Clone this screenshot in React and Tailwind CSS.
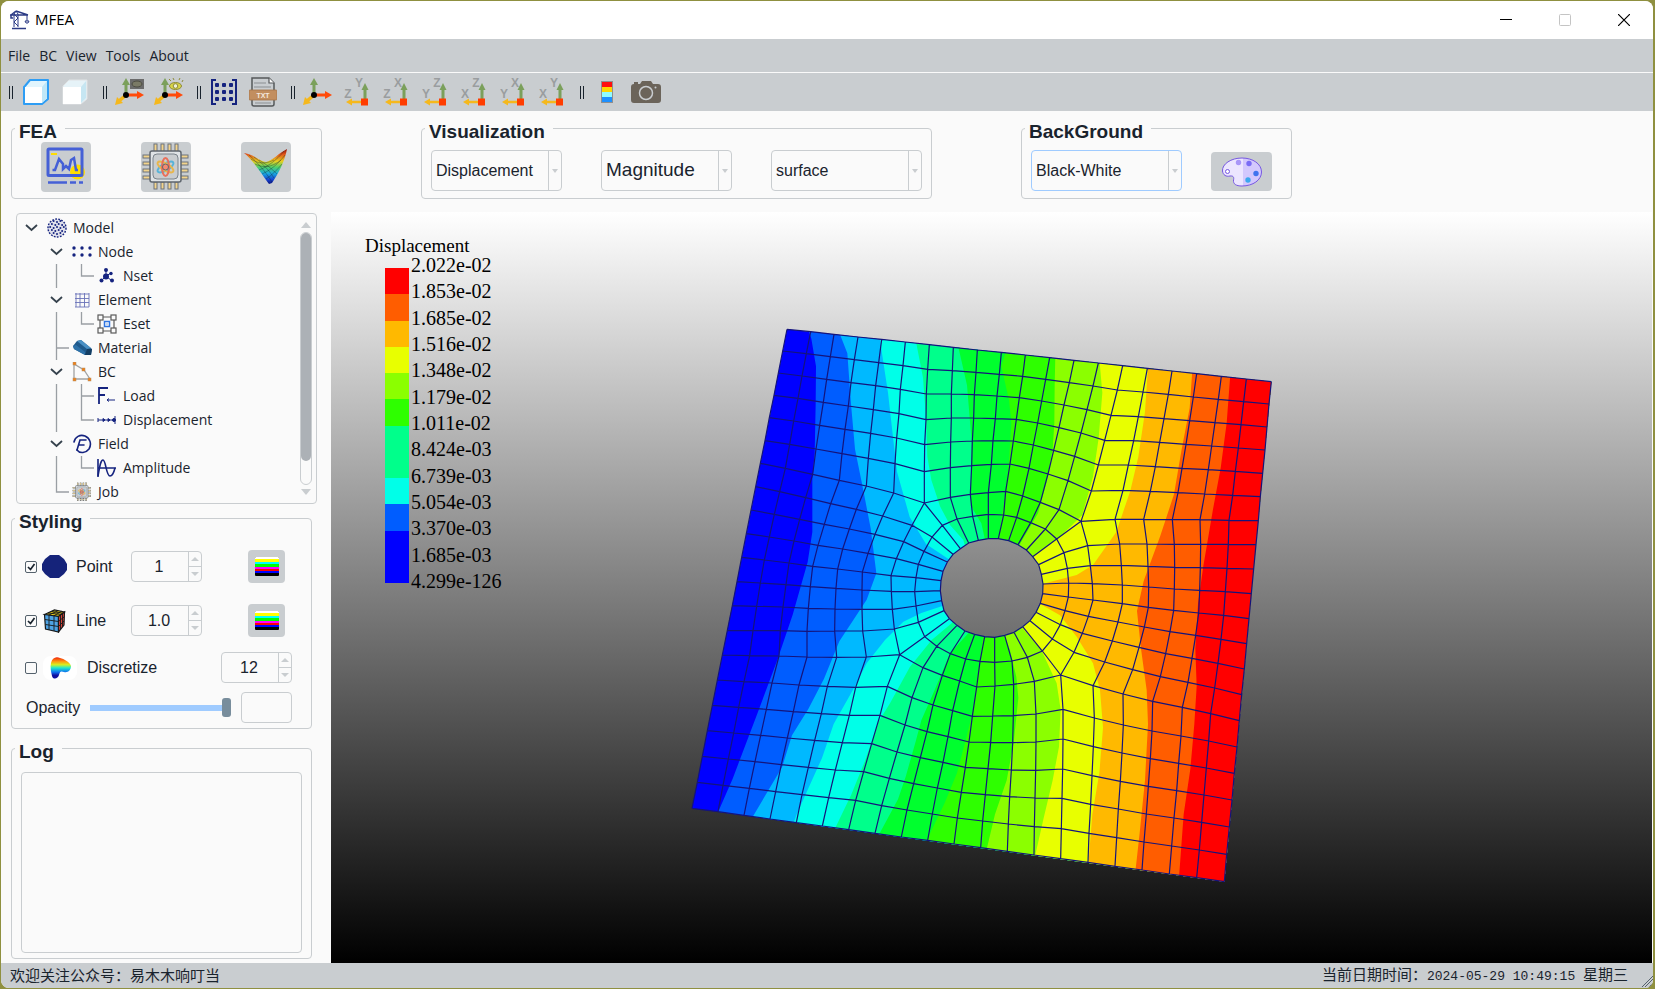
import { useState } from "react";

const toolbarGroups = [
  ["cube-solid", "cube-ghost"],
  ["axes-hidden", "axes-visible"],
  ["matrix", "txt"],
  ["axes", "Y-Z", "X-Z", "Z-Y", "Z-X", "X-Y", "Y-X"],
  ["legend", "camera"],
];

// guides: one entry per 25px column in front of the icon
const treeRows = [
  { label: "Model", icon: "model", guides: ["open"] },
  { label: "Node", icon: "node", guides: ["", "open"] },
  { label: "Nset", icon: "nset", guides: ["", "line", "ell"] },
  { label: "Element", icon: "element", guides: ["", "open"] },
  { label: "Eset", icon: "eset", guides: ["", "line", "ell"] },
  { label: "Material", icon: "material", guides: ["", "tee"] },
  { label: "BC", icon: "bc", guides: ["", "open"] },
  { label: "Load", icon: "load", guides: ["", "line", "tee"] },
  { label: "Displacement", icon: "displacement", guides: ["", "line", "ell"] },
  { label: "Field", icon: "field", guides: ["", "open"] },
  { label: "Amplitude", icon: "amplitude", guides: ["", "line", "ell"] },
  { label: "Job", icon: "chip", guides: ["", "ell"] },
];

const scaleLabels = [
  "2.022e-02", "1.853e-02", "1.685e-02", "1.516e-02", "1.348e-02", "1.179e-02", "1.011e-02",
  "8.424e-03", "6.739e-03", "5.054e-03", "3.370e-03", "1.685e-03", "4.299e-126",
];

const scaleColors = [
  "#ff0000", "#ff5d00", "#ffb900", "#e8ff00", "#8bff00", "#2eff00",
  "#00ff8b", "#00ff8b", "#00ffe8", "#005dff", "#0000ff", "#0000ff",
];

/* ---------- Mesh ---------- */

const DIVISIONS = 20;
const corners = { tl: [275, 51], tr: [1520, 190], br: [1399, 1519], bl: [31, 1324] };

// graded split of one plate side, nodes from..to
function side(a, b, grade, from, to) {
  const pts = [];
  for (let i = from; i <= to; i++) {
    const t = i / DIVISIONS;
    const s = t - grade * t * (1 - t);
    pts.push([a[0] + (b[0] - a[0]) * s, a[1] + (b[1] - a[1]) * s]);
  }
  return pts;
}

const topSide = (f, t) => side(corners.tl, corners.tr, 0.03, f, t);
const bottomSide = (f, t) => side(corners.bl, corners.br, 0.032, f, t);
const leftSide = (f, t) => side(corners.tl, corners.bl, 0.094, f, t);
const rightSide = (f, t) => side(corners.tr, corners.br, 0.104, f, t);

// spokes from the inner square to the sides
const topLeft = [[641, 92], [637, 158], [633, 223], [632, 291], [629, 358], [628, 430], [628, 513]];
const topRight = [[1138, 148], [1124, 213], [1108, 280], [1092, 346], [1075, 412], [1057, 481], [1031, 562]];
const leftTop = [[209, 408], [273, 421], [343, 437], [411, 453], [480, 468], [550, 486], [628, 513]];
const leftBottom = [[110, 915], [180, 917], [255, 918], [327, 921], [403, 922], [479, 922], [565, 916]];
const rightTop = [[1031, 562], [1118, 556], [1192, 556], [1266, 557], [1337, 557], [1412, 558], [1487, 559]];
const rightBottom = [[979, 970], [1062, 998], [1139, 1020], [1215, 1040], [1291, 1056], [1364, 1072], [1438, 1091]];
const bottomLeft = [[565, 916], [533, 1000], [514, 1077], [493, 1152], [472, 1227], [452, 1303], [434, 1381]];
const bottomRight = [[979, 970], [985, 1061], [985, 1140], [984, 1220], [982, 1298], [980, 1378], [979, 1458]];

// inner square around the hole
const squareTop = [[628, 513], [695, 498], [746, 490], [793, 485], [837, 482], [881, 494], [926, 511], [974, 531], [1031, 562]];
const squareRight = [[1031, 562], [1048, 626], [1055, 679], [1060, 727], [1062, 771], [1050, 814], [1034, 859], [1013, 910], [979, 970]];
const squareBottom = [[565, 916], [625, 950], [674, 971], [719, 986], [763, 1002], [810, 999], [858, 995], [911, 987], [979, 970]];
const squareLeft = [[628, 513], [596, 572], [575, 616], [556, 661], [542, 706], [543, 748], [546, 795], [551, 848], [565, 916]];

// 32 nodes each, clockwise from the upper left corner
const ring = [
  [247, 226], [291, 207], [338, 199], [385, 193], [431, 195], [470, 202], [512, 218], [556, 237],
  [590, 267], [612, 308], [622, 355], [626, 399], [625, 441], [615, 482], [601, 524], [577, 567],
  [547, 603], [502, 622], [456, 633], [404, 637], [360, 634], [317, 627], [271, 611], [230, 589],
  [194, 560], [175, 517], [168, 468], [164, 425], [168, 383], [175, 343], [192, 304], [216, 261],
];
const hole = [
  [301, 296], [326, 279], [355, 271], [385, 266], [415, 266], [446, 272], [474, 284], [499, 300],
  [518, 320], [536, 344], [544, 373], [549, 402], [548, 431], [541, 460], [528, 487], [510, 512],
  [488, 530], [462, 547], [434, 556], [404, 562], [374, 560], [344, 553], [315, 543], [291, 526],
  [268, 506], [252, 482], [245, 452], [241, 422], [243, 392], [249, 364], [262, 336], [279, 313],
];

// contour curves, blue to red
const contours = [
  { color: "#005dff", pts: [[328, 50], [338, 76], [350, 150], [349, 250], [346, 380], [340, 450], [340, 590], [328, 670], [290, 810], [250, 930], [200, 1070], [135, 1245], [98, 1335]] },
  { color: "#00b9ff", pts: [[410, 60], [430, 115], [440, 250], [450, 370], [470, 470], [490, 580], [505, 700], [480, 770], [410, 880], [370, 980], [330, 1060], [288, 1130], [262, 1215], [185, 1350]] },
  { color: "#00ffe8", pts: [[512, 70], [518, 110], [535, 220], [547, 330], [558, 430], [590, 550], [632, 622], [695, 665], [720, 740], [680, 785], [620, 805], [574, 828], [527, 877], [480, 939], [450, 1000], [395, 1100], [365, 1190], [300, 1340], [290, 1370]] },
  { color: "#00ff8b", pts: [[606, 80], [625, 180], [632, 290], [636, 390], [646, 452], [668, 522], [694, 571], [728, 611], [760, 730], [698, 833], [647, 877], [591, 948], [540, 1045], [510, 1095], [475, 1200], [440, 1290], [395, 1385]] },
  { color: "#00ff2e", pts: [[714, 90], [738, 200], [750, 350], [747, 520], [775, 567], [783, 607], [780, 740], [741, 859], [694, 912], [655, 1010], [620, 1090], [605, 1150], [580, 1240], [560, 1300], [508, 1400]] },
  { color: "#2eff00", pts: [[838, 110], [826, 150], [846, 240], [852, 300], [846, 400], [837, 482], [828, 545], [818, 607], [800, 740], [779, 868], [762, 992], [753, 1063], [738, 1130], [712, 1230], [680, 1310], [633, 1412]] },
  { color: "#8bff00", pts: [[965, 120], [963, 200], [962, 300], [958, 370], [942, 460], [920, 540], [874, 622], [830, 740], [835, 865], [848, 904], [865, 975], [870, 1030], [858, 1150], [840, 1250], [810, 1340], [787, 1440]] },
  { color: "#e8ff00", pts: [[1078, 130], [1086, 220], [1076, 340], [1062, 443], [1034, 545], [977, 602], [908, 655], [860, 740], [878, 843], [930, 905], [968, 992], [979, 1063], [974, 1160], [958, 1250], [935, 1350], [912, 1455]] },
  { color: "#ffb900", pts: [[1203, 150], [1195, 270], [1178, 390], [1158, 480], [1122, 590], [1062, 678], [1020, 704], [934, 727], [890, 750], [925, 780], [977, 811], [1020, 868], [1062, 939], [1080, 1010], [1087, 1110], [1078, 1230], [1060, 1340], [1050, 1475]] },
  { color: "#ff5d00", pts: [[1317, 160], [1310, 260], [1290, 370], [1270, 490], [1235, 600], [1192, 720], [1175, 800], [1185, 900], [1200, 1010], [1203, 1100], [1195, 1250], [1182, 1390], [1170, 1500]] },
  { color: "#ff0000", pts: [[1415, 170], [1405, 300], [1390, 420], [1370, 530], [1345, 680], [1332, 780], [1325, 900], [1328, 1000], [1322, 1100], [1312, 1220], [1295, 1340], [1282, 1520]] },
];

// plate space -> drawing space
const plate = ([x, y]) => [Math.round(x * 1.167 - 540), Math.round(y * 1.129 - 420)];

function coons(top, bottom, left, right) {
  const n = top.length - 1;
  const m = left.length - 1;
  return left.map((_, j) =>
    top.map((_, i) => {
      const u = i / n;
      const v = j / m;
      return [0, 1].map(
        (k) =>
          (1 - v) * top[i][k] + v * bottom[i][k] + (1 - u) * left[j][k] + u * right[j][k] -
          ((1 - u) * (1 - v) * top[0][k] + u * (1 - v) * top[n][k] + (1 - u) * v * bottom[0][k] + u * v * bottom[n][k])
      );
    })
  );
}

const blocks = [
  coons(topSide(0, 6), leftTop, leftSide(0, 6), topLeft),
  coons(topSide(6, 14), squareTop, topLeft, topRight),
  coons(topSide(14, 20), rightTop, topRight, rightSide(0, 6)),
  coons(leftTop, leftBottom, leftSide(6, 14), squareLeft),
  coons(rightTop, rightBottom, squareRight, rightSide(6, 14)),
  coons(leftBottom, bottomSide(0, 6), leftSide(14, 20), bottomLeft),
  coons(squareBottom, bottomSide(6, 14), bottomLeft, bottomRight),
  coons(rightBottom, bottomSide(14, 20), bottomRight, rightSide(14, 20)),
];

const toPath = (pts) => "M" + pts.map((p) => p.join(" ")).join("L");

function meshPath() {
  const lines = [];
  blocks.forEach((rows) => {
    rows.forEach((row) => lines.push(toPath(row.map(plate))));
    rows[0].forEach((_, i) => lines.push(toPath(rows.map((row) => plate(row[i])))));
  });
  const square = [
    ...squareTop.slice(0, 8),
    ...squareRight.slice(0, 8),
    ...[...squareBottom].reverse().slice(0, 8),
    ...[...squareLeft].reverse().slice(0, 8),
  ].map(plate);
  square.forEach((p, i) => lines.push(toPath([p, ring[i], hole[i]])));
  lines.push(toPath(ring) + "Z", toPath(hole) + "Z");
  return lines.join("");
}

const plateOutline =
  toPath([corners.tl, corners.tr, corners.br, corners.bl].map(plate)) + "Z" + toPath(hole) + "Z";
const meshLines = meshPath();

function Mesh() {
  return (
    <svg viewBox="-540 -420 1830 1770" className="w-[610px] h-[590px] shrink-0" role="img" aria-label="Displacement contour">
      <clipPath id="plate">
        <path d={plateOutline} clipRule="evenodd" />
      </clipPath>
      <g clipPath="url(#plate)">
        <rect x="-540" y="-420" width="1830" height="1770" fill="#0000ff" />
        {contours.map((c) => (
          <path key={c.color} d={toPath([...c.pts, [1600, 1600], [1600, 0]].map(plate)) + "Z"} fill={c.color} />
        ))}
      </g>
      <path d={meshLines} fill="none" stroke="#14147c" strokeWidth="3.6" />
    </svg>
  );
}

/* ---------- Icons ---------- */

function ChipIcon({ className }) {
  const pins = [13, 20, 27, 34];
  return (
    <svg viewBox="0 0 50 50" className={className}>
      <g fill="#f3d48c" stroke="#6c737b" strokeWidth="1">
        {pins.map((p) => (
          <g key={p}>
            <rect x={p} y="2" width="3" height="8" />
            <rect x={p} y="40" width="3" height="7" />
            <rect x="2" y={p} width="8" height="3" />
            <rect x="39" y={p} width="8" height="3" />
          </g>
        ))}
      </g>
      <rect x="9" y="9" width="31" height="31" rx="2" fill="#dfe3e6" stroke="#5f666e" strokeWidth="1.5" />
      <rect x="12" y="12" width="25" height="25" rx="4" fill="#c9cdd0" stroke="#7b838b" strokeWidth="1" />
      <g fill="none" strokeWidth="2">
        <ellipse cx="24.500" cy="25" rx="3.500" ry="9" stroke="#57b3d8" transform="rotate(60 24.500 25)" />
        <ellipse cx="24.500" cy="25" rx="3.500" ry="9" stroke="#e8b64c" transform="rotate(-60 24.500 25)" />
        <ellipse cx="24.500" cy="25" rx="3.500" ry="9" stroke="#e9705a" />
      </g>
      <circle cx="24.500" cy="25" r="3" fill="#f58a72" stroke="#5f666e" strokeWidth="1" />
    </svg>
  );
}

function MonitorIcon() {
  return (
    <svg viewBox="0 0 50 50" className="size-[50px]">
      <circle cx="36.500" cy="30" r="7.500" fill="#ffdd00" />
      <path d="M10 12h6" stroke="#ffdd00" strokeWidth="2" />
      <rect x="7" y="7" width="34" height="26.500" rx="1" fill="none" stroke="#4560d6" strokeWidth="3" />
      <path d="M11.500 28H14L18 17L22 22V27L25 24L28 27L30 18L33 16L35 28H37" fill="none" stroke="#4560d6" strokeWidth="2.500" />
      <path d="M7 40.500h19M29 40.500h6M38 40.500h4" stroke="#4560d6" strokeWidth="2.500" />
    </svg>
  );
}

function SurfaceIcon() {
  return (
    <svg viewBox="0 0 50 50" className="size-[50px]">
      <defs>
        <linearGradient id="surf" x1="0" y1="0" x2="0" y2="1">
          <stop offset="0" stopColor="#8a1208" />
          <stop offset="0.150" stopColor="#e0521a" />
          <stop offset="0.350" stopColor="#e8cf20" />
          <stop offset="0.520" stopColor="#4fd06a" />
          <stop offset="0.700" stopColor="#18a8e0" />
          <stop offset="0.880" stopColor="#1540d0" />
          <stop offset="1" stopColor="#0a1478" />
        </linearGradient>
      </defs>
      <path d="M3 11C12 12 18 19 25 20C31 19 38 11 46 7C44 18 38 31 31 41L28 42C22 34 12 18 3 11Z" fill="url(#surf)" />
      <path
        d="M8 13C16 20 24 29 31 40M13 15C20 20 28 28 33 36M18 18C25 22 32 28 36 32M43 9C36 18 26 25 18 28M44 13C38 21 30 28 21 32M41 22C36 28 31 33 25 37M10 17C17 22 25 22 33 18M14 22C22 26 30 26 40 18"
        fill="none" stroke="#10242c" strokeWidth="0.500" opacity="0.700"
      />
    </svg>
  );
}

function PaletteIcon() {
  return (
    <svg viewBox="0 0 40 30" className="w-[40px] h-[30px]">
      <path d="M20 1C9 1 0 7 0.500 14C1 18 4 20 8 19C12 18.500 12 21 11.500 23C11 27 14 29 20 29C31 29 39.500 23 39.500 15C39.500 7 31 1 20 1Z" fill="#ece5ff" />
      <path d="M21 1C31 1 39.500 7 39.500 15C39.500 23 31 29 21 29Z" fill="#d3c8fd" />
      <path d="M20 1C9 1 0 7 0.500 14C1 18 4 20 8 19C12 18.500 12 21 11.500 23C11 27 14 29 20 29C31 29 39.500 23 39.500 15C39.500 7 31 1 20 1Z" fill="none" stroke="#7557e0" strokeWidth="1" />
      <circle cx="5.500" cy="14.500" r="2" fill="#fff" stroke="#7557e0" />
      <circle cx="16.500" cy="5.500" r="2.700" fill="#a996f8" />
      <circle cx="27" cy="6.500" r="2.700" fill="#7a6cf5" />
      <circle cx="34" cy="16.500" r="2.700" fill="#3f74ee" />
      <circle cx="26" cy="23" r="2.700" fill="#3ba7ee" />
    </svg>
  );
}

function SwatchIcon() {
  return (
    <svg viewBox="0 0 24 19" className="w-6 h-[19px]">
      <rect width="24" height="19" rx="1" fill="#000" />
      <rect width="24" height="3" rx="1" fill="#fff" />
      <rect y="2" width="24" height="3" fill="#ffff00" />
      <rect y="5" width="24" height="2" fill="#00ffff" />
      <rect y="7" width="24" height="3" fill="#00ff00" />
      <rect y="10" width="24" height="2" fill="#ff00ff" />
      <rect y="12" width="24" height="2" fill="#ff0000" />
      <rect y="14" width="24" height="2" fill="#0000ff" />
    </svg>
  );
}

function RubikIcon() {
  return (
    <svg viewBox="0 0 24 24" className="w-[25px] h-[24px]">
      <path d="M2 5.500L12 1L22 3L16 7.500Z" fill="#e3c91c" stroke="#16181a" strokeWidth="1.200" />
      <path d="M2 5.500L16 7.500V23L3 20Z" fill="#4ea3e4" stroke="#16181a" strokeWidth="1.200" />
      <path d="M16 7.500L22 3L21.500 16L16 23Z" fill="#d8453a" stroke="#16181a" strokeWidth="1.200" />
      <path d="M2.500 10.500L16 12.500L22 7.500M3 15.500L16 17.500L21.500 12M6.500 6V21M11.500 7V22M18 6V20M20 4.500V18M5.500 4L19 5.500M9 2.500L20.500 4.200M6.500 6L15.500 1.700M11.500 6.800L19 2.300" fill="none" stroke="#16181a" strokeWidth="0.900" />
    </svg>
  );
}

function FieldSurfaceIcon() {
  return (
    <svg viewBox="0 0 34 24" className="w-[34px] h-[24px]">
      <defs>
        <linearGradient id="blob" x1="0" y1="0" x2="0" y2="1">
          <stop offset="0" stopColor="#f0200a" />
          <stop offset="0.200" stopColor="#ff9a10" />
          <stop offset="0.350" stopColor="#d8f020" />
          <stop offset="0.500" stopColor="#20e8d0" />
          <stop offset="0.700" stopColor="#1070f0" />
          <stop offset="0.850" stopColor="#1010a0" />
        </linearGradient>
      </defs>
      <rect width="34" height="24" rx="8" fill="#fff" />
      <path d="M8 7C9 2 13 0 17 2C21 3 27 6 28 10C28 14 25 17 21 16C18 15 17 15 16 19C15 23 10 24 9 20C8 16 7 11 8 7Z" fill="url(#blob)" />
    </svg>
  );
}

function Axes({ eye }) {
  return (
    <svg viewBox="0 0 30 28" className="w-[30px] h-[28px]">
      <path d="M11 17V6" stroke="#7ba05b" strokeWidth="3" />
      <path d="M11 0L15 7H7Z" fill="#7ba05b" />
      <path d="M11 17H24" stroke="#ff4a0a" strokeWidth="3" />
      <path d="M29 17L22 13V21Z" fill="#ff4a0a" />
      <path d="M11 17L4 23" stroke="#f5b81c" strokeWidth="3.500" />
      <path d="M0 27L2 19L8 25Z" fill="#f5b81c" />
      <circle cx="11" cy="17" r="3" fill="#000" />
      {eye === "hidden" && (
        <g>
          <rect x="15" y="1" width="14" height="10" fill="#6b6b6b" />
          <ellipse cx="22" cy="6" rx="5" ry="3" fill="#7a7a66" stroke="#4d4d42" />
        </g>
      )}
      {eye === "visible" && (
        <g>
          <path d="M17 3L15 1M20 2L19 0M25 2L26 0M28 4L29 2" stroke="#8d8a3a" />
          <ellipse cx="21.500" cy="8" rx="6" ry="3.500" fill="#d8d448" stroke="#8d8a3a" />
          <circle cx="21.500" cy="8" r="2.300" fill="#eef0d8" stroke="#8d8a3a" />
        </g>
      )}
    </svg>
  );
}

function PlaneAxes({ up, left }) {
  return (
    <svg viewBox="0 0 26 30" className="w-[26px] h-[30px] font-['Liberation_Sans',Arial,sans-serif]">
      <path d="M21 25V12" stroke="#7ba05b" strokeWidth="3" />
      <path d="M21 6L24.500 13H17.500Z" fill="#7ba05b" />
      <path d="M20 25H7" stroke="#f5b81c" strokeWidth="2.500" />
      <path d="M2 25L8 21.500V28.500Z" fill="#f5b81c" />
      <rect x="17" y="21.500" width="7" height="7" fill="#ff3d00" />
      <text x="15" y="10" fontSize="12" fontWeight="bold" fill="#9a9d9f" textAnchor="middle">{up}</text>
      <text x="4" y="21" fontSize="12" fontWeight="bold" fill="#9a9d9f" textAnchor="middle">{left}</text>
    </svg>
  );
}

function ToolIcon({ name }) {
  switch (name) {
    case "cube-solid":
      return (
        <svg viewBox="0 0 26 26" className="size-[26px]">
          <path d="M2 7L7 1H25V20L19 25H1V8Z" fill="#e2f5fd" stroke="#2e9df4" strokeWidth="2" strokeLinejoin="round" />
          <path d="M2 8H19V24H2Z" fill="#fff" />
          <path d="M19 8L24 2V19L19 24Z" fill="#bfe7f8" />
        </svg>
      );
    case "cube-ghost":
      return (
        <svg viewBox="0 0 26 26" className="size-[26px]">
          <path d="M1 7L7 1H25V20L19 25H1Z" fill="#e6f3f8" stroke="#dfe2e4" strokeWidth="1" />
          <path d="M1 8H19V25H1Z" fill="#fff" />
          <path d="M19 8L24 2V19L19 24Z" fill="#c6e6f2" />
        </svg>
      );
    case "axes-hidden":
      return <Axes eye="hidden" />;
    case "axes-visible":
      return <Axes eye="visible" />;
    case "axes":
      return <Axes />;
    case "matrix":
      return (
        <svg viewBox="0 0 26 26" className="size-[26px]">
          <path d="M5 1H1V25H5M21 1H25V25H21" fill="none" stroke="#15237f" strokeWidth="2" />
          <g fill="#15237f">
            {[4, 11, 18].map((y) => [4, 11, 18].map((x) => <rect key={x + "-" + y} x={x} y={y} width="4" height="4" rx="1" />))}
          </g>
        </svg>
      );
    case "txt":
      return (
        <svg viewBox="0 0 28 30" className="w-[28px] h-[30px]">
          <path d="M3 1H20L25 6V27Q25 29 23 29H5Q3 29 3 27Z" fill="none" stroke="#55585a" strokeWidth="1.500" />
          <path d="M20 1V6H25" fill="#fff" stroke="#55585a" strokeWidth="1.200" />
          <path d="M5 6H17M5 10H22M6 26H22" stroke="#8b8f92" strokeWidth="1" />
          <rect x="0" y="13" width="28" height="10" rx="1" fill="#c28e5f" stroke="#a5744a" strokeWidth="0.800" />
          <text x="14" y="20.500" fontSize="7" fontWeight="bold" fill="#f4e9de" textAnchor="middle" className="font-['Liberation_Sans',Arial,sans-serif]">TXT</text>
        </svg>
      );
    case "legend":
      return (
        <svg viewBox="0 0 12 22" className="w-[12px] h-[22px]">
          <rect width="12" height="22" fill="#8f8f8f" />
          <rect x="1" y="1" width="10" height="5" fill="#ff0f0f" />
          <rect x="1" y="6" width="10" height="5" fill="#ffd500" />
          <rect x="1" y="11" width="10" height="5" fill="#8ffcff" />
          <rect x="1" y="16" width="10" height="5" fill="#1e90ff" />
        </svg>
      );
    case "camera":
      return (
        <svg viewBox="0 0 30 24" className="w-[30px] h-[24px]">
          <path d="M3 4V2H7V4H9L11 1H20L22 4H27Q30 4 30 7V20Q30 23 27 23H3Q0 23 0 20V7Q0 4 3 4Z" fill="#6b645a" />
          <circle cx="15" cy="13" r="6.500" fill="none" stroke="#c9cdd0" strokeWidth="1.500" />
          <circle cx="24.500" cy="7.500" r="1" fill="#c9cdd0" />
        </svg>
      );
    default: {
      const [up, left] = name.split("-");
      return <PlaneAxes up={up} left={left} />;
    }
  }
}

function TreeIcon({ name }) {
  const navy = "#15237f";
  const box = "size-5 shrink-0";
  switch (name) {
    case "model": {
      const rows = [[3, 3], [6, 4], [9, 5], [12, 4], [15, 3]];
      return (
        <svg viewBox="0 0 20 20" className={box}>
          <circle cx="10" cy="10" r="9" fill={navy} fillOpacity="0.120" stroke={navy} strokeWidth="1.400" strokeDasharray="1.800 1.300" />
          {rows.map(([y, n]) =>
            Array.from({ length: n }, (_, i) => (
              <circle key={y + "-" + i} cx={10 + (i - (n - 1) / 2) * 3.4} cy={y + (i % 2)} r="1" fill={navy} />
            ))
          )}
        </svg>
      );
    }
    case "node":
      return (
        <svg viewBox="0 0 20 20" className={box} fill={navy}>
          {[2, 10, 18].map((x) => [6, 13].map((y) => <circle key={x + "-" + y} cx={x} cy={y} r="1.700" />))}
        </svg>
      );
    case "nset":
      return (
        <svg viewBox="0 0 20 20" className={box} fill={navy}>
          <path d="M9 10V4M9 10L14 7M9 10L4 15M9 10L15 15" stroke={navy} />
          <circle cx="9" cy="10.500" r="3" />
          <circle cx="9" cy="4" r="2" />
          <circle cx="14" cy="7.500" r="1.700" />
          <circle cx="4.500" cy="14.500" r="2" />
          <circle cx="15" cy="14.500" r="2" />
        </svg>
      );
    case "element":
      return (
        <svg viewBox="0 0 20 20" className={box}>
          <path d="M4 3V17M8 3V17M12.500 3V17M17 3V17M3 4H17M3 8.500H17M3 12.500H17M3 17H17" fill="none" stroke="#6a73b8" strokeWidth="0.900" />
        </svg>
      );
    case "eset":
      return (
        <svg viewBox="0 0 20 20" className={box} fill="#fafafa" stroke="#5a5a5a" strokeWidth="1.200">
          <path d="M3 3H17V17H3Z" />
          <rect x="1" y="1" width="5" height="5" />
          <rect x="14" y="1" width="5" height="5" />
          <rect x="1" y="14" width="5" height="5" />
          <rect x="14" y="14" width="5" height="5" />
          <rect x="7.500" y="7.500" width="5" height="5" stroke="#2f74e0" strokeWidth="1.500" />
          <rect x="9.500" y="9.500" width="1" height="1" fill="#2f74e0" stroke="none" />
        </svg>
      );
    case "material":
      return (
        <svg viewBox="0 0 20 20" className={box}>
          <path d="M1 8L5 3L9 2L20 11L19 17L13 17L2 11Z" fill="#1f5a8c" />
          <path d="M5 3L9 2L19 10L15 11Z" fill="#4a90c4" />
          <path d="M1 8L4 7L13 14L13 17L2 11Z" fill="#2d71a8" />
          <path d="M13 17L15 11L20 11L19 17Z" fill="#143e63" />
        </svg>
      );
    case "bc":
      return (
        <svg viewBox="0 0 20 20" className={box}>
          <path d="M2 2V17H18L12 8Z" fill="none" stroke="#a3a3a3" strokeWidth="1.300" />
          {[[1, 0], [1, 16], [16, 16], [10, 6]].map(([x, y]) => (
            <rect key={x + "-" + y} x={x} y={y} width="3" height="3" fill="#ef8019" stroke="#b0906a" strokeWidth="0.500" />
          ))}
        </svg>
      );
    case "load":
      return (
        <svg viewBox="0 0 20 20" className={box} fill="none" stroke={navy}>
          <path d="M2 18V2H11M2 9H8" strokeWidth="1.800" />
          <path d="M10 14H18M12 12.500L10 14L12 15.500" />
        </svg>
      );
    case "displacement":
      return (
        <svg viewBox="0 0 20 20" className={box} fill={navy} stroke={navy}>
          <path d="M1 10H18M1 8V12M6 8.500L8 10L6 11.500ZM11 8.500L13 10L11 11.500ZM18 6V14" />
          <circle cx="17" cy="10" r="1.500" />
        </svg>
      );
    case "field":
      return (
        <svg viewBox="0 0 20 20" className={box} fill="none" stroke={navy} strokeWidth="1.600" strokeLinecap="round">
          <path d="M2 8C3 3 8 0 13 2C18 4 20 10 17 15C14 19 8 20 5 16" />
          <path d="M14 6H8L5 16M7 11H12" />
        </svg>
      );
    case "amplitude":
      return (
        <svg viewBox="0 0 20 20" className={box} fill="none" stroke={navy} strokeWidth="1.600">
          <path d="M1 1V19M1 10H19" />
          <path d="M1 18C3 6 4 2 6 2C9 2 9 18 13 18C16 18 17 14 18 10" />
        </svg>
      );
    default:
      return <ChipIcon className={box} />;
  }
}

/* ---------- Controls ---------- */

function Group({ title, className, children }) {
  return (
    <fieldset className={`min-w-0 border border-[#c9cdd0] rounded ${className}`}>
      <legend className="ml-[3px] pl-1 pr-2 pt-2 text-[19px] leading-5 font-bold">{title}</legend>
      {children}
    </fieldset>
  );
}

function Combo({ label, options, className = "border-[#c9cdd0]", textSize = "text-base" }) {
  return (
    <div className={`relative h-[41px] border rounded ${className}`}>
      <select aria-label={label} className={`appearance-none w-full h-full pl-1 pr-4 outline-none bg-transparent ${textSize}`}>
        {options.map((o) => (
          <option key={o}>{o}</option>
        ))}
      </select>
      <span className="absolute inset-y-0 right-0 w-[13px] flex items-center justify-center border-l border-[#c9cdd0] pointer-events-none">
        <svg viewBox="0 0 6 4" className="w-1.5 h-1"><path d="M0 0H6L3 4Z" fill="#c9cdd0" /></svg>
      </span>
    </div>
  );
}

function Spinner({ label, initial, step = 1, digits = 0, className = "" }) {
  const [value, setValue] = useState(initial);
  const arrow = "flex-1 flex items-center justify-center";
  return (
    <div className={`flex w-[71px] h-[31px] border border-[#c9cdd0] rounded ${className}`}>
      <input
        aria-label={label}
        value={value.toFixed(digits)}
        onChange={(e) => setValue(Number(e.target.value) || 0)}
        className="flex-1 min-w-0 pr-0.5 text-center outline-none bg-transparent"
      />
      <div className="flex flex-col w-[13px] border-l border-[#c9cdd0]">
        <button aria-label={`Increase ${label}`} className={`${arrow} border-b border-[#c9cdd0]`} onClick={() => setValue(value + step)}>
          <svg viewBox="0 0 8 4" className="w-2 h-1"><path d="M0 4H8L4 0Z" fill="#c9cdd0" /></svg>
        </button>
        <button aria-label={`Decrease ${label}`} className={arrow} onClick={() => setValue(value - step)}>
          <svg viewBox="0 0 8 4" className="w-2 h-1"><path d="M0 0H8L4 4Z" fill="#c9cdd0" /></svg>
        </button>
      </div>
    </div>
  );
}

function Check({ id, defaultChecked }) {
  return (
    <span className="relative flex size-3 shrink-0">
      <input
        id={id}
        type="checkbox"
        defaultChecked={defaultChecked}
        className="peer appearance-none size-3 border border-[#54616c] rounded-xs"
      />
      <svg viewBox="0 0 12 12" className="absolute inset-0 size-3 opacity-0 peer-checked:opacity-100 pointer-events-none">
        <path d="M3 6L5.500 8.500L9.500 3" fill="none" stroke="#19232d" strokeWidth="1.700" />
      </svg>
    </span>
  );
}

function Guide({ kind }) {
  const paths = { line: "M12.500 0V24", tee: "M12.500 0V24M12.500 12H25", ell: "M12.500 0V12H25" };
  return (
    <svg viewBox="0 0 25 24" className="w-[25px] h-6 shrink-0" fill="none">
      {kind === "open" && <path d="M7 9L12.500 14L18 9" stroke="#36424d" strokeWidth="1.800" />}
      {paths[kind] && <path d={paths[kind]} stroke="#9a9fa4" strokeWidth="1.300" />}
    </svg>
  );
}

/* ---------- Panels ---------- */

function TitleBar() {
  return (
    <header className="flex items-center h-[38px] shrink-0 bg-white pl-[9px] pb-px">
      <svg viewBox="0 0 20 20" className="size-5" fill="none" stroke="#2c3b85">
        <path d="M4 17V4L6 1L8 4V17M4 4L8 8L4 12L8 16M8 8L4 12" strokeWidth="1" />
        <path d="M0 5H18M6 1L18 5M6 1L1 5M1 5V8H3M2 18.500H16" strokeWidth="1.500" />
        <path d="M17 5V11M15 11H19L18 13H16Z" strokeWidth="1" />
      </svg>
      <h1 className="ml-[5px] text-[15px] text-black">MFEA</h1>
      <div className="ml-auto flex text-black">
        <button aria-label="Minimize" className="w-[59px] h-[37px] flex items-center justify-center">
          <svg viewBox="0 0 12 12" className="size-3" stroke="currentColor"><path d="M0 5.500H12" /></svg>
        </button>
        <button aria-label="Maximize" disabled className="w-[59px] h-[37px] flex items-center justify-center text-[#c4c4c4]">
          <svg viewBox="0 0 12 12" className="size-3" fill="none" stroke="currentColor"><rect x="0.500" y="0.500" width="11" height="11" rx="1" /></svg>
        </button>
        <button aria-label="Close" className="w-[59px] h-[37px] flex items-center justify-center">
          <svg viewBox="0 0 12 12" className="size-3" stroke="currentColor" strokeWidth="1.200"><path d="M0 0L12 12M12 0L0 12" /></svg>
        </button>
      </div>
    </header>
  );
}

function MenuBar() {
  return (
    <nav className="flex items-center gap-[9px] h-[33px] shrink-0 pl-[7px] bg-[#c9cdd0] text-sm">
      {["File", "BC", "View", "Tools", "About"].map((m) => (
        <button key={m}>{m}</button>
      ))}
    </nav>
  );
}

function Toolbar() {
  return (
    <div className="flex items-center h-[39px] shrink-0 pl-px bg-[#c9cdd0] border-t border-[#fafafa]">
      {toolbarGroups.map((group) => (
        <div key={group[0]} className="flex items-center pl-[3px] pr-[2px]">
          <span className="w-[11px] h-[13px] flex justify-center gap-[2px]">
            <span className="w-px bg-[#19232d]" />
            <span className="w-px bg-[#19232d]" />
          </span>
          {group.map((name) => (
            <button key={name} aria-label={name} className="w-[39px] h-[36px] flex items-center justify-center">
              <ToolIcon name={name} />
            </button>
          ))}
        </div>
      ))}
    </div>
  );
}

function ModelTree() {
  return (
    <div className="flex w-[301px] h-[291px] ml-[5px] mt-[14px] shrink-0 border border-[#c9cdd0] rounded text-sm">
      <ul className="flex-1 pt-[2px] pl-0.5">
        {treeRows.map((row) => (
          <li key={row.label} className="flex items-center h-6">
            {row.guides.map((g, i) => (
              <Guide key={i} kind={g} />
            ))}
            <span className="ml-[3px] mr-1.5"><TreeIcon name={row.icon} /></span>
            {row.label}
          </li>
        ))}
      </ul>
      <div className="flex flex-col items-center w-3 mr-1 py-2 gap-1">
        <svg viewBox="0 0 10 6" className="w-2.5 h-1.5 shrink-0"><path d="M0 6H10L5 0Z" fill="#c9cdd0" /></svg>
        <div className="flex-1 w-full border border-[#c9cdd0] rounded-md">
          <div className="h-[91%] w-full bg-[#acb1b6] rounded-md" />
        </div>
        <svg viewBox="0 0 10 6" className="w-2.5 h-1.5 shrink-0"><path d="M0 0H10L5 6Z" fill="#c9cdd0" /></svg>
      </div>
    </div>
  );
}

function StylingPanel() {
  const swatch = "flex items-center justify-center w-[37px] h-[33px] ml-[46px] bg-[#c9cdd0] rounded";
  return (
    <Group title="Styling" className="w-[301px] h-[225px] shrink-0">
      <div className="pt-[18px] pl-[13px] pr-[19px]">
        <div className="flex items-center h-[33px]">
          <Check id="point" defaultChecked />
          <label htmlFor="point" className="flex items-center w-[94px] pl-[5px] gap-[9px]">
            <svg viewBox="0 0 25 23" className="w-[25px] h-[23px]"><path d="M8 0H17L22 4L25 9V15L22 19L17 23H8L3 19L0 15V9L3 4Z" fill="#15237a" /></svg>
            Point
          </label>
          <Spinner label="Point size" initial={1} />
          <button aria-label="Point color" className={swatch}><SwatchIcon /></button>
        </div>
        <div className="flex items-center h-[33px] mt-[21px]">
          <Check id="line" defaultChecked />
          <label htmlFor="line" className="flex items-center w-[94px] pl-[5px] gap-[9px]">
            <RubikIcon />
            Line
          </label>
          <Spinner label="Line width" initial={1} digits={1} step={0.1} />
          <button aria-label="Line color" className={swatch}><SwatchIcon /></button>
        </div>
        <div className="flex items-center h-[31px] mt-[15px]">
          <Check id="discretize" />
          <label htmlFor="discretize" className="flex items-center pl-1.5 gap-[10px]">
            <FieldSurfaceIcon />
            Discretize
          </label>
          <Spinner label="Discretize levels" initial={12} className="ml-auto" />
        </div>
        <div className="flex items-center h-[31px] mt-[9px]">
          <label htmlFor="opacity" className="ml-px mr-2.5">Opacity</label>
          <input
            id="opacity"
            type="range"
            defaultValue="100"
            className="appearance-none flex-1 min-w-0 h-1.5 mr-2.5 bg-[#9fcbff] [&::-webkit-slider-thumb]:appearance-none [&::-webkit-slider-thumb]:w-[9px] [&::-webkit-slider-thumb]:h-[19px] [&::-webkit-slider-thumb]:rounded-[3px] [&::-webkit-slider-thumb]:bg-[#788d9c]"
          />
          <input aria-label="Opacity value" className="w-[51px] h-[31px] px-1 border border-[#c9cdd0] rounded outline-none" />
        </div>
      </div>
    </Group>
  );
}

function ScalarBar() {
  return (
    <div className="absolute left-[34px] top-[22px] font-['Liberation_Serif','Times_New_Roman',serif] text-black">
      <div className="text-[19px] leading-6">Displacement</div>
      <div className="flex gap-0.5 pl-5">
        <div className="flex flex-col w-6 h-[315px] mt-[10px]">
          {scaleColors.map((c, i) => (
            <span key={i} className="flex-1" style={{ background: c }} />
          ))}
        </div>
        <ul className="flex flex-col justify-between h-[342px] -mt-[6px] text-[20px] leading-[26px]">
          {scaleLabels.map((l) => (
            <li key={l}>{l}</li>
          ))}
        </ul>
      </div>
    </div>
  );
}

function StatusBar() {
  return (
    <footer className="flex items-center h-[25px] shrink-0 pl-[9px] pb-px bg-[#c9cdd0] text-[15px] font-['Noto_Sans_CJK_SC',sans-serif]">
      <span>欢迎关注公众号：易木木响叮当</span>
      <span className="ml-auto">
        当前日期时间：<span className="font-['Liberation_Mono',monospace] text-[13px]">2024-05-29 10:49:15 </span>星期三
      </span>
      <svg viewBox="0 0 12 12" className="size-3 ml-[13px] self-end" stroke="#54616c"><path d="M1 12L12 1M4 12L12 4M8 12L12 8" /></svg>
    </footer>
  );
}

function App() {
  const feaButton = "flex items-center justify-center size-[50px] bg-[#c9cdd0] rounded";
  return (
    <div className="h-screen bg-[#8f9040] pt-px pl-px pr-0.5 pb-px font-['Liberation_Sans',Arial,sans-serif] text-base text-[#19232d]">
      <div className="flex flex-col h-full rounded-lg overflow-hidden bg-[#fafafa]">
        <div className="shrink-0 font-['Open_Sans','Segoe_UI',sans-serif]">
          <TitleBar />
          <MenuBar />
        </div>
        <Toolbar />
        <main className="flex flex-1 min-h-0">
          {/* Left column */}
          <aside className="flex flex-col w-[330px] shrink-0 pl-2.5 pt-[3px] pb-1">
            <Group title="FEA" className="w-[311px] h-[85px] shrink-0">
              <div className="flex gap-[50px] pl-[29px]">
                <button aria-label="Preview" className={feaButton}><MonitorIcon /></button>
                <button aria-label="Solve" className={feaButton}><ChipIcon className="size-[50px]" /></button>
                <button aria-label="Result" className={feaButton}><SurfaceIcon /></button>
              </div>
            </Group>
            <div className="shrink-0 font-['Open_Sans','Segoe_UI',sans-serif]">
              <ModelTree />
            </div>
            <StylingPanel />
            <Group title="Log" className="flex-1 w-[301px] mt-[5px]">
              <div className="h-full px-[9px] pt-[10px] pb-[5px]">
                <textarea aria-label="Log" readOnly className="block w-full h-full resize-none border border-[#c9cdd0] rounded outline-none" />
              </div>
            </Group>
          </aside>

          {/* Viewport */}
          <section className="flex flex-col flex-1 min-w-0">
            <div className="flex h-[101px] shrink-0 pt-[3px] pl-[90px] gap-[89px]">
              <Group title="Visualization" className="w-[511px] h-[85px]">
                <div className="flex gap-[39px] pt-2 pl-[9px]">
                  <Combo label="Field" options={["Displacement", "Stress"]} className="w-[131px] border-[#c9cdd0]" />
                  <Combo label="Component" options={["Magnitude", "X", "Y"]} className="w-[131px] border-[#c9cdd0]" textSize="text-[19px]" />
                  <Combo label="Representation" options={["surface", "wireframe"]} className="w-[151px] border-[#c9cdd0]" />
                </div>
              </Group>
              <Group title="BackGround" className="w-[271px] h-[85px]">
                <div className="flex items-end gap-[29px] pt-2 pl-[9px]">
                  <Combo label="Background" options={["Black-White", "White"]} className="w-[151px] border-[#9fcbff]" />
                  <button aria-label="Pick color" className="flex items-center justify-center w-[61px] h-[39px] bg-[#c9cdd0] rounded">
                    <PaletteIcon />
                  </button>
                </div>
              </Group>
            </div>
            <div className="relative flex flex-1 min-h-0 items-center justify-center mr-px pt-[34px] pr-[13px] bg-linear-to-b/srgb from-white to-black">
              <ScalarBar />
              <Mesh />
            </div>
          </section>
        </main>
        <StatusBar />
      </div>
    </div>
  );
}

export default App;
